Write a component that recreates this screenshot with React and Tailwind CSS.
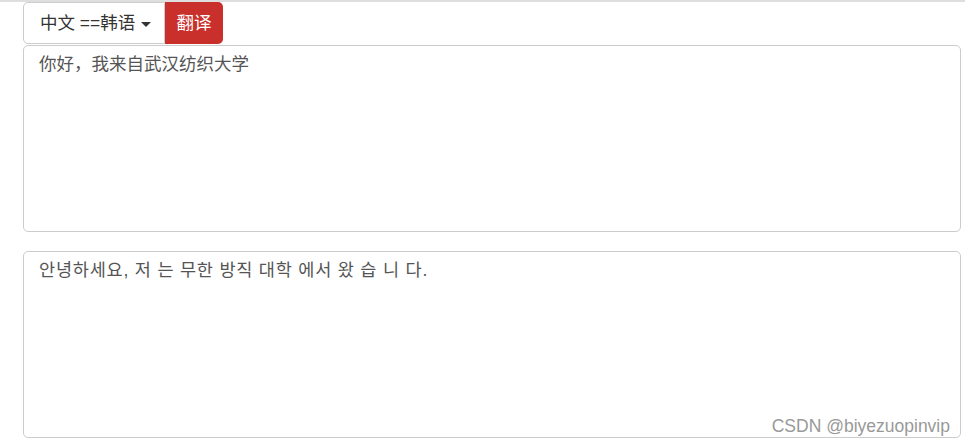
import React from "react";

export default function App() {
  return (
    <div className="w-[965px] h-[445px] bg-white overflow-hidden relative font-['Liberation_Sans','Noto_Sans_CJK_SC','Noto_Sans_CJK_KR',sans-serif]">
      <div className="h-[2px] bg-[#dedede]" />
      <div className="ml-[23px] w-[938px]">
        <div className="flex h-[42px]">
          <div className="w-[142px] h-full border border-[#ccc] rounded-l-[5px] flex items-center pl-[16px] text-[17.5px] text-[#333] bg-white">
            <span>中文 ==韩语</span>
            <span className="ml-[6px] mt-[2px] w-0 h-0 border-l-[5px] border-r-[5px] border-t-[5px] border-l-transparent border-r-transparent border-t-[#333]" />
          </div>
          <div className="w-[58px] h-full bg-[#c9302c] rounded-r-[5px] flex items-center justify-center text-white text-[17.5px]">
            翻译
          </div>
        </div>
        <div className="mt-[1px] h-[187px] border border-[#ccc] rounded-[5px] px-[15px] py-[6px] text-[17.5px] text-[#555] leading-[25px]">
          你好，我来自武汉纺织大学
        </div>
        <div className="mt-[19px] h-[187px] border border-[#ccc] rounded-[5px] px-[15px] py-[6px] text-[17.5px] text-[#555] leading-[25px] tracking-[0.8px]">
          안녕하세요, 저 는 무한 방직 대학 에서 왔 습 니 다.
        </div>
      </div>
      <div className="absolute right-[15px] bottom-[10px] text-[17.5px] text-[#999] font-['Liberation_Sans',sans-serif] leading-none">
        CSDN @biyezuopinvip
      </div>
    </div>
  );
}
